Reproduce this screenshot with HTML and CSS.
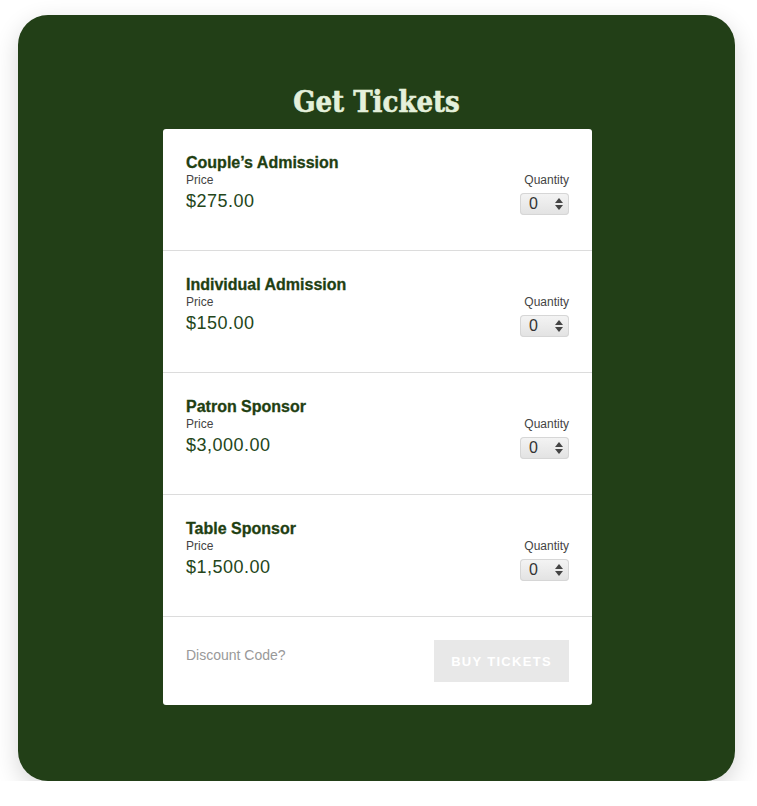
FILE: index.html
```html
<!DOCTYPE html>
<html>
<head>
<meta charset="utf-8">
<link rel="stylesheet" href="styles.css">
</head>
<body>
<div class="panel">
  <h1 class="title">Get Tickets</h1>
  <div class="card">
    <div class="row">
      <div class="name">Couple’s Admission</div>
      <div class="line">
        <div class="col">
          <div class="label">Price</div>
          <div class="price">$275.00</div>
        </div>
        <div class="col right">
          <div class="label">Quantity</div>
          <div class="qty"><span class="num">0</span><span class="arrows"><span class="up"></span><span class="down"></span></span></div>
        </div>
      </div>
    </div>
    <div class="row">
      <div class="name">Individual Admission</div>
      <div class="line">
        <div class="col">
          <div class="label">Price</div>
          <div class="price">$150.00</div>
        </div>
        <div class="col right">
          <div class="label">Quantity</div>
          <div class="qty"><span class="num">0</span><span class="arrows"><span class="up"></span><span class="down"></span></span></div>
        </div>
      </div>
    </div>
    <div class="row">
      <div class="name">Patron Sponsor</div>
      <div class="line">
        <div class="col">
          <div class="label">Price</div>
          <div class="price">$3,000.00</div>
        </div>
        <div class="col right">
          <div class="label">Quantity</div>
          <div class="qty"><span class="num">0</span><span class="arrows"><span class="up"></span><span class="down"></span></span></div>
        </div>
      </div>
    </div>
    <div class="row">
      <div class="name">Table Sponsor</div>
      <div class="line">
        <div class="col">
          <div class="label">Price</div>
          <div class="price">$1,500.00</div>
        </div>
        <div class="col right">
          <div class="label">Quantity</div>
          <div class="qty"><span class="num">0</span><span class="arrows"><span class="up"></span><span class="down"></span></span></div>
        </div>
      </div>
    </div>
    <div class="footer">
      <div class="discount">Discount Code?</div>
      <div class="buy">BUY TICKETS</div>
    </div>
  </div>
</div>
</body>
</html>
```
FILE: styles.css
```css
html, body {
  margin: 0;
  padding: 0;
  background: #ffffff;
}
body {
  font-family: "Liberation Sans", Arial, sans-serif;
}
.panel {
  box-sizing: border-box;
  width: 717px;
  height: 766px;
  margin: 15px 0 0 18px;
  background: #223f17;
  border-radius: 30px;
  box-shadow: 0 8px 24px rgba(0, 0, 0, 0.16);
  display: flex;
  flex-direction: column;
  align-items: center;
  padding-top: 70px;
}
.title {
  margin: 0 0 10px 0;
  height: 34px;
  line-height: 34px;
  font-family: "DejaVu Serif Condensed", "DejaVu Serif", serif;
  font-stretch: condensed;
  font-weight: bold;
  font-size: 29px;
  color: #e4f0db;
  -webkit-text-stroke: 0.6px #e4f0db;
}
.card {
  margin-left: 2px;
  width: 429px;
  background: #ffffff;
  border-radius: 3px;
}
.row {
  box-sizing: border-box;
  height: 122px;
  padding: 24px 23px 0 23px;
  border-bottom: 1px solid #dcdcdc;
}
.name {
  font-size: 16px;
  line-height: 20px;
  font-weight: bold;
  color: #1f3f12;
  -webkit-text-stroke: 0.3px #1f3f12;
}
.line {
  display: flex;
  justify-content: space-between;
}
.col {
  display: flex;
  flex-direction: column;
}
.col.right {
  align-items: flex-end;
}
.label {
  font-size: 12px;
  line-height: 14px;
  color: #444444;
}
.price {
  margin-top: 3px;
  font-size: 18px;
  letter-spacing: 0.5px;
  line-height: 22px;
  color: #24461a;
}
.qty {
  margin-top: 6px;
  box-sizing: border-box;
  width: 49px;
  height: 22px;
  border-radius: 4px;
  background: linear-gradient(#f4f4f4, #e2e2e2);
  box-shadow: inset 0 0 0 1px #d6d6d6;
  display: flex;
  align-items: center;
  justify-content: space-between;
  padding: 0 6px 0 9px;
}
.num {
  font-size: 16px;
  color: #333333;
  line-height: 18px;
}
.arrows {
  display: flex;
  flex-direction: column;
  gap: 2px;
}
.up {
  width: 0;
  height: 0;
  border-left: 4px solid transparent;
  border-right: 4px solid transparent;
  border-bottom: 5px solid #444;
}
.down {
  width: 0;
  height: 0;
  border-left: 4px solid transparent;
  border-right: 4px solid transparent;
  border-top: 5px solid #444;
}
.footer {
  box-sizing: border-box;
  height: 88px;
  padding: 23px;
  display: flex;
  justify-content: space-between;
  align-items: flex-start;
}
.discount {
  margin-top: 6px;
  font-size: 14px;
  line-height: 18px;
  color: #999999;
}
.buy {
  width: 135px;
  height: 42px;
  background: #e8e8e8;
  color: #ffffff;
  font-weight: bold;
  font-size: 13px;
  letter-spacing: 1.3px;
  display: flex;
  align-items: center;
  justify-content: center;
}
```
